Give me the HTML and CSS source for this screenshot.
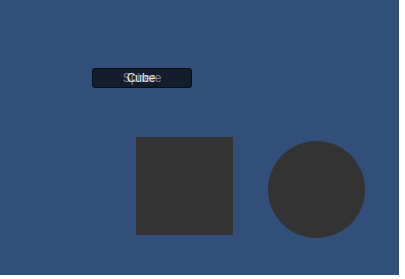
FILE: index.html
```html
<!DOCTYPE html>
<html lang="en">
<head>
  <meta charset="UTF-8">
  <title>Shapes</title>
  <link rel="stylesheet" href="styles.css">
</head>
<body>
  <div class="stage">
    <div class="picker">
      <span class="option ghost">Sphere</span>
      <span class="option current">Cube</span>
    </div>
    <div class="shapes">
      <div class="shape square"></div>
      <div class="shape circle"></div>
    </div>
  </div>
</body>
</html>
```
FILE: styles.css
```css
body {
  margin: 0;
  padding: 0;
  background-color: #fff;
  font-family: "Liberation Sans", Arial, sans-serif;
}

.stage {
  width: 399px;
  height: 275px;
  background-color: #314f79;
  padding-top: 68px;
  box-sizing: border-box;
  overflow: hidden;
}

.picker {
  margin-left: 92px;
  width: 100px;
  height: 20px;
  box-sizing: border-box;
  padding-top: 1px;
  background-color: #141d2e;
  border: 1px solid #0a0e16;
  border-radius: 3px;
  display: grid;
  place-items: center;
  font-size: 12px;
}

.option {
  grid-area: 1 / 1;
  line-height: 17px;
}

.option.current {
  color: #e6e8ec;
  margin-right: 2px;
}

.option.ghost {
  color: #7d8594;
}

.shapes {
  display: flex;
  align-items: flex-start;
  margin-top: 49px;
  padding-left: 136px;
}

.shape {
  background-color: #333;
}

.square {
  width: 97px;
  height: 98px;
}

.circle {
  width: 97px;
  height: 97px;
  border-radius: 50%;
  margin-left: 35px;
  margin-top: 4px;
}
```
